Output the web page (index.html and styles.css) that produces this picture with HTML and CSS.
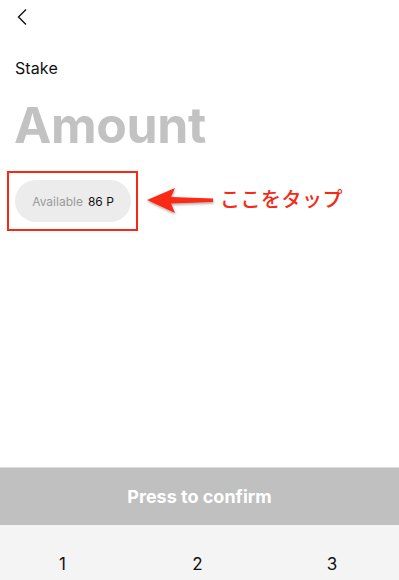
FILE: index.html
```html
<!DOCTYPE html>
<html lang="ja">
<head>
<meta charset="utf-8">
<link rel="stylesheet" href="styles.css">
</head>
<body>
<div class="screen">
  <header class="topbar">
    <svg class="back" width="12" height="18" viewBox="0 0 12 18"><path d="M10 1.5 L2.5 9 L10 16.5" fill="none" stroke="#111" stroke-width="1.4"/></svg>
  </header>
  <div class="title">Stake</div>
  <div class="amount">Amount</div>
  <div class="avail-row">
    <div class="highlight">
      <div class="pill"><span class="pill-label">Available</span><span class="pill-value">86 P</span></div>
    </div>
    <svg class="arrow" width="70" height="32" viewBox="0 0 70 32">
      <defs><filter id="sh" x="-20%" y="-30%" width="140%" height="170%"><feDropShadow dx="0.5" dy="1.5" stdDeviation="1.2" flood-color="#000" flood-opacity="0.35"/></filter></defs>
      <path d="M2 14 L30 2 L26 11 L68 12.5 L68 16 L26 17.5 L30 27 Z" fill="#fb2a14" filter="url(#sh)"/>
    </svg>
    <span class="tap">ここをタップ</span>
  </div>
  <div class="spacer"></div>
  <button class="confirm">Press to confirm</button>
  <div class="keypad">
    <div class="key">1</div><div class="key">2</div><div class="key">3</div>
  </div>
</div>
</body>
</html>
```
FILE: styles.css
```css
html, body { margin: 0; padding: 0; }
body { width: 399px; height: 580px; overflow: hidden; background: #fff; font-family: Inter, "Noto Sans", sans-serif; color: #111; }
.screen { display: flex; flex-direction: column; height: 580px; }
.topbar { height: 36px; display: flex; align-items: center; padding-left: 16px; }
.back { display: block; margin-top: -2px; }
.title { font-size: 16px; padding: 22px 0 0 15px; line-height: 20px; letter-spacing: 0.1px; }
.amount { font-size: 50px; font-weight: 700; color: #c2c2c2; padding: 16px 0 0 14px; line-height: 62px; letter-spacing: -0.4px; }
.avail-row { display: flex; align-items: center; margin-top: 15px; padding-left: 7px; }
.highlight { border: 2.5px solid #f62a14; padding: 7px 5px 7px 6px; }
.pill { background: #ececec; border-radius: 21px; height: 42px; width: 116px; display: flex; align-items: center; justify-content: center; gap: 5px; font-size: 12px; }
.pill-label { color: #9a9a9a; }
.pill-value { color: #111; }
.arrow { display: block; margin-left: 7px; margin-top: 2px; }
.tap { color: #f62a14; font-family: "Noto Sans CJK JP", sans-serif; font-size: 20px; font-weight: 500; margin-left: 5px; margin-top: -6px; letter-spacing: 0.5px; }
.spacer { flex: 1; }
.confirm { border: 0; border-top: 1px solid #dcdcdc; background: #c0c0c0; color: #fff; height: 58px; font-family: Inter, sans-serif; font-size: 18px; font-weight: 700; width: 100%; flex: none; padding: 0; }
.keypad { flex: none; height: 55px; background: #f4f4f4; display: grid; grid-template-columns: 135px 135px 1fr; margin-left: -5px; }
.key { display: flex; justify-content: center; align-items: flex-start; padding-top: 29px; font-size: 17px; line-height: 20px; color: #111; }
```
